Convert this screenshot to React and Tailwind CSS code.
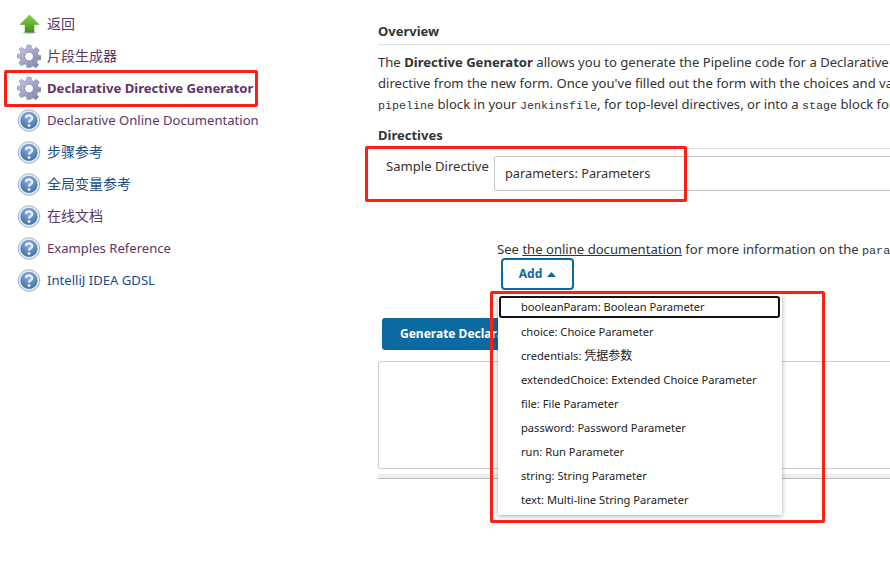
const FONT = "font-['Noto_Sans','Noto_Sans_CJK_SC',sans-serif]";

function ArrowIcon() {
  return (
    <svg width="24" height="24" viewBox="0 0 24 24" className="shrink-0">
      <defs>
        <linearGradient id="ag" x1="0" y1="0" x2="0" y2="1">
          <stop offset="0" stopColor="#8ad24a" />
          <stop offset="1" stopColor="#3f8f16" />
        </linearGradient>
      </defs>
      <ellipse cx="12.5" cy="20.5" rx="7" ry="1.5" fill="#ccc" />
      <path d="M12.5 3 L22 12.5 L17 12.5 L17 20.5 L8 20.5 L8 12.5 L3 12.5 Z" fill="url(#ag)" stroke="#5a9e2c" strokeWidth="0.5" />
    </svg>
  );
}

function GearIcon() {
  return (
    <svg width="24" height="24" viewBox="0 0 24 24" className="shrink-0">
      <defs>
        <linearGradient id="gg" x1="0" y1="0" x2="1" y2="1">
          <stop offset="0" stopColor="#c9cbe3" />
          <stop offset="1" stopColor="#7d80a8" />
        </linearGradient>
      </defs>
      <path
        d="M10 1 h4 l.6 3.4 l2 .9 L19.6 3.3 l2.8 2.9 l-2 2.9 l.8 2 L24 11.7 v3.8 l-3.5.7 l-.8 2 l2 2.9 l-2.8 2.7 l-3-1.9 l-1.9.8 L13.500 23.600 h-3.500 l-.7-2.800 l-2-.8 l-3 1.900 L1.700 19.100 l2-2.900 l-.8-2 L0 13.500 v-3 l3-.6 l.8-2 l-2-2.900 L4.600 3.300 l2.800 2 l2-.9 Z"
        fill="url(#gg)"
        stroke="#8184a8"
        strokeWidth="0.5"
      />
      <circle cx="12" cy="12.500" r="4.500" fill="#fff" stroke="#7275a0" strokeWidth="0.8" />
    </svg>
  );
}

function HelpIcon() {
  return (
    <svg width="24" height="24" viewBox="0 0 24 24" className="shrink-0">
      <defs>
        <radialGradient id="hg" cx="0.5" cy="0.3" r="0.8">
          <stop offset="0" stopColor="#8fb0d8" />
          <stop offset="1" stopColor="#33659f" />
        </radialGradient>
      </defs>
      <circle cx="12" cy="12.500" r="10.800" fill="#dfe7f1" stroke="#8ea6c4" strokeWidth="0.8" />
      <circle cx="12" cy="12.500" r="8.500" fill="url(#hg)" />
      <path d="M8.800 9.800 C9 6.800 15.200 6.600 15.200 10 C15.200 12.400 12 12.200 12 14.500" fill="none" stroke="#e8eef6" strokeWidth="2.400" />
      <circle cx="12" cy="17.500" r="1.500" fill="#e8eef6" />
    </svg>
  );
}

const cjk = "mt-[-2px] text-[14px]";
const latin = "mt-[2px]";

const sideItems = [
  { icon: <ArrowIcon />, label: "返回", color: `text-[#5c3566] ${cjk}` },
  { icon: <GearIcon />, label: "片段生成器", color: `text-[#5c3566] ${cjk}` },
  { icon: <GearIcon />, label: "Declarative Directive Generator", color: `text-[#5c3566] font-bold ${latin}` },
  { icon: <HelpIcon />, label: "Declarative Online Documentation", color: `text-[#5c3566] ${latin}` },
  { icon: <HelpIcon />, label: "步骤参考", color: `text-[#204a87] ${cjk}` },
  { icon: <HelpIcon />, label: "全局变量参考", color: `text-[#204a87] ${cjk}` },
  { icon: <HelpIcon />, label: "在线文档", color: `text-[#5c3566] ${cjk}` },
  { icon: <HelpIcon />, label: "Examples Reference", color: `text-[#5c3566] ${latin}` },
  { icon: <HelpIcon />, label: "IntelliJ IDEA GDSL", color: `text-[#204a87] ${latin}` },
];

const menuItems = [
  "booleanParam: Boolean Parameter",
  "choice: Choice Parameter",
  "credentials: ",
  "extendedChoice: Extended Choice Parameter",
  "file: File Parameter",
  "password: Password Parameter",
  "run: Run Parameter",
  "string: String Parameter",
  "text: Multi-line String Parameter",
];

const mono = "font-['Liberation_Mono',monospace] text-[11.7px]";

export default function App() {
  return (
    <div className={`${FONT} relative flex h-[579px] w-[890px] overflow-hidden bg-white text-[13.1px] text-[#333]`}>
      <nav className="flex w-[378px] shrink-0 flex-col pl-[17px] pt-[8px]">
        {sideItems.map((it) => (
          <div key={it.label} className="flex h-[32px] items-center gap-[6px]">
            {it.icon}
            <span className={`whitespace-nowrap ${it.color}`}>{it.label}</span>
          </div>
        ))}
      </nav>

      <main className="relative w-[700px] shrink-0 whitespace-nowrap pt-[21px]">
        <h2 className="h-[24px] border-b border-[#ddd] text-[13px] font-bold leading-[20px]">Overview</h2>
        <div className="mt-[7px] leading-[21px]">
          <p>
            The <b>Directive Generator</b> allows you to generate the Pipeline code for a Declarative Pipeline
          </p>
          <p>directive from the new form. Once you've filled out the form with the choices and values</p>
          <p>
            <code className={mono}>pipeline</code> block in your <code className={mono}>Jenkinsfile</code>, for top-level directives, or into a <code className={mono}>stage</code> block for
          </p>
        </div>
        <h2 className="mt-[8px] h-[24px] border-b border-[#ddd] text-[13px] font-bold leading-[20px]">Directives</h2>
        <div className="mt-[7px] flex">
          <label className="ml-[8px] w-[108px] leading-[20px]">Sample Directive</label>
          <div className="flex h-[35px] w-[500px] items-center rounded-[2px] border border-[#c4c4c4] pl-[10px] text-[12.75px]">
            parameters: Parameters
          </div>
        </div>
        <div className="ml-[119px] mt-[48px] h-[19px] leading-[20px]">
          See <a className="text-[#333] underline">the online documentation</a> for more information on the <code className={mono}>parameters</code>
        </div>
        <button className="ml-[123px] flex h-[32px] w-[73px] items-center justify-center gap-[5px] rounded-[4px] border-2 border-[#0b6aa2] text-[12px] font-bold text-[#0b6aa2]">
          Add
          <svg width="9" height="5" viewBox="0 0 9 5"><path d="M4.500 0 L9 5 H0 Z" fill="#0b6aa2" /></svg>
        </button>
        <button className="ml-[4px] mt-[28px] block h-[32px] w-[260px] rounded-[3px] bg-[#0b6aa2] pl-[18px] text-left text-[12px] font-bold text-white">
          Generate Declarative Directive
        </button>
        <div className="mt-[11px] h-[108px] w-[600px] rounded-[3px] border border-[#ccc]" />
        <div className="mt-[5px] h-[5px] w-[600px] border-b border-[#bbb] bg-[#eee]" />

        <ul className="absolute left-[120px] top-[294px] h-[221px] w-[284px] bg-white pt-[2px] text-[11.15px] text-[#222] shadow-[0_1px_5px_rgba(0,0,0,0.35)]">
          {menuItems.map((m, i) => (
            <li
              key={m}
              className={
                i === 0
                  ? "mb-[2px] ml-[1px] mr-[2px] flex h-[22px] items-center rounded-[3px] border-2 border-[#111] pl-[20px]"
                  : "ml-[1px] mr-[2px] flex h-[24px] items-center whitespace-pre pl-[22px]"
              }
            >
              {m}
              {i === 2 && <span className="text-[12px]">凭据参数</span>}
            </li>
          ))}
        </ul>
      </main>

      <div className="absolute left-[4px] top-[70px] h-[37px] w-[254px] rounded-[2px] border-[3px] border-[#fb1f14]" />
      <div className="absolute left-[365px] top-[146px] h-[56px] w-[322px] rounded-[2px] border-[3px] border-[#fb1f14]" />
      <div className="absolute left-[490px] top-[291px] h-[232px] w-[335px] rounded-[2px] border-[3px] border-[#fb1f14]" />
    </div>
  );
}
